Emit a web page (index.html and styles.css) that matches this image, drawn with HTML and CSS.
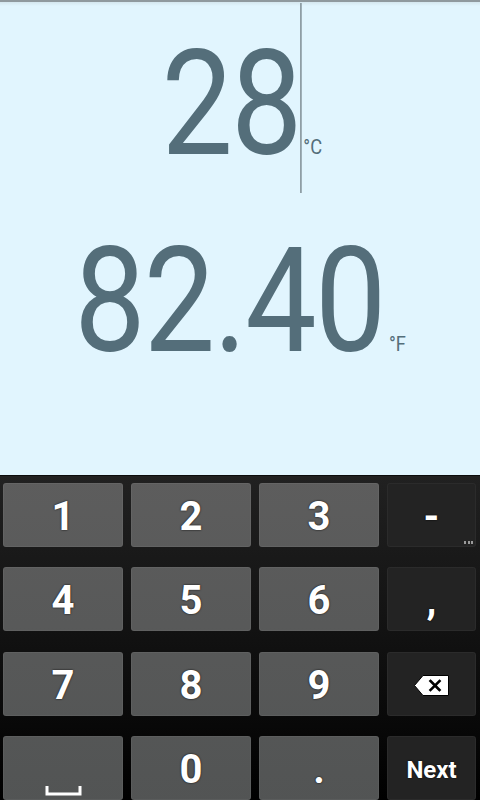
FILE: index.html
```html
<!DOCTYPE html>
<html lang="en">
<head>
    <meta charset="UTF-8">
    <meta name="viewport" content="width=device-width, initial-scale=1.0">
    <title>Temperature Converter</title>
    <link rel="stylesheet" href="styles.css">
</head>
<body>
    <div class="screen">
        <div class="display">
            <div class="reading celsius">
                <span class="value">28</span>
                <span class="cursor"></span>
                <span class="unit">°C</span>
            </div>
            <div class="reading fahrenheit">
                <span class="value">82.40</span>
                <span class="unit">°F</span>
            </div>
        </div>

        <!-- numeric keypad -->
        <div class="keyboard">
            <button class="key">1</button>
            <button class="key">2</button>
            <button class="key">3</button>
            <button class="key fn">-<span class="more"></span></button>

            <button class="key">4</button>
            <button class="key">5</button>
            <button class="key">6</button>
            <button class="key fn">,</button>

            <button class="key">7</button>
            <button class="key">8</button>
            <button class="key">9</button>
            <button class="key fn">
                <svg width="35" height="21" viewBox="0 0 35 21">
                    <path d="M0.5 10.5 L9 0.5 H34.5 V20.5 H9 Z" fill="#fff" stroke="#000" stroke-width="1"/>
                    <path d="M16.5 6 L25.5 15 M25.5 6 L16.5 15" stroke="#000" stroke-width="2.6" stroke-linecap="square"/>
                </svg>
            </button>

            <button class="key space">
                <svg width="37" height="10" viewBox="0 0 37 10">
                    <path d="M2 0 V8 H35 V0" fill="none" stroke="#fff" stroke-width="3"/>
                </svg>
            </button>
            <button class="key">0</button>
            <button class="key">.</button>
            <button class="key fn next">Next</button>
        </div>
    </div>
</body>
</html>
```

FILE: styles.css
```css
body {
    margin: 0;
    width: 480px;
    height: 800px;
    overflow: hidden;
    background-color: #000;
    font-family: Roboto, "Liberation Sans", sans-serif;
}
.screen {
    display: flex;
    flex-direction: column;
    height: 800px;
}
.display {
    height: 476px;
    background-color: #e1f5fe;
    border-top: 2px solid #8f999e;
    box-sizing: border-box;
    padding-top: 1px;
    background-image: linear-gradient(#d4e6ee, #e1f5fe 4px);
}
.reading {
    display: flex;
    justify-content: center;
    align-items: baseline;
    color: #546e7a;
    transform: scaleX(0.87);
}
.celsius {
    height: 190px;
    padding-left: 4px;
}
.value {
    font-size: 146px;
    line-height: 1;
    letter-spacing: -2px;
}
.celsius .value {
    margin-top: 29px;
}
.fahrenheit .value {
    margin-top: 36px;
}
.cursor {
    align-self: stretch;
    width: 2px;
    margin: 0 1px 0 -1px;
    background-color: #8c9ca3;
}
.unit {
    font-size: 21px;
    margin-left: 1px;
}
.fahrenheit .unit {
    margin-left: 5px;
}
.keyboard {
    flex: 1;
    display: grid;
    grid-template-columns: 120px 120px 120px 89px;
    grid-auto-rows: 64px;
    column-gap: 8px;
    row-gap: 20.5px;
    padding: 7px 4px 0 3px;
    border-top: 1px solid #0c0c0c;
    background: linear-gradient(#212121, #0e0e0e 60%, #000);
}
.key {
    position: relative;
    display: flex;
    align-items: center;
    justify-content: center;
    padding: 3px 0 0;
    border: none;
    border-radius: 3px;
    color: #fff;
    font-family: Roboto, "Liberation Sans", sans-serif;
    font-size: 40px;
    font-weight: bold;
    text-shadow: 0 0 2px #000;
    background: linear-gradient(#5d5d5d, #4d5050 60%, #484848) fixed;
    background-position: 0 476px;
    box-shadow: inset 0 0 0 1px rgba(255, 255, 255, 0.05);
}
.key.fn {
    background: #232323;
    box-shadow: inset 0 0 0 1px rgba(255, 255, 255, 0.04);
}
.key.space {
    align-items: flex-end;
    padding: 0 0 4px;
    box-sizing: border-box;
}
.key.next {
    font-size: 24px;
    padding-top: 3px;
}
.more {
    position: absolute;
    right: 3px;
    bottom: 3px;
    width: 9px;
    height: 3px;
    background: repeating-linear-gradient(90deg, #9a9a9a 0 2px, transparent 2px 3.5px);
}
```
